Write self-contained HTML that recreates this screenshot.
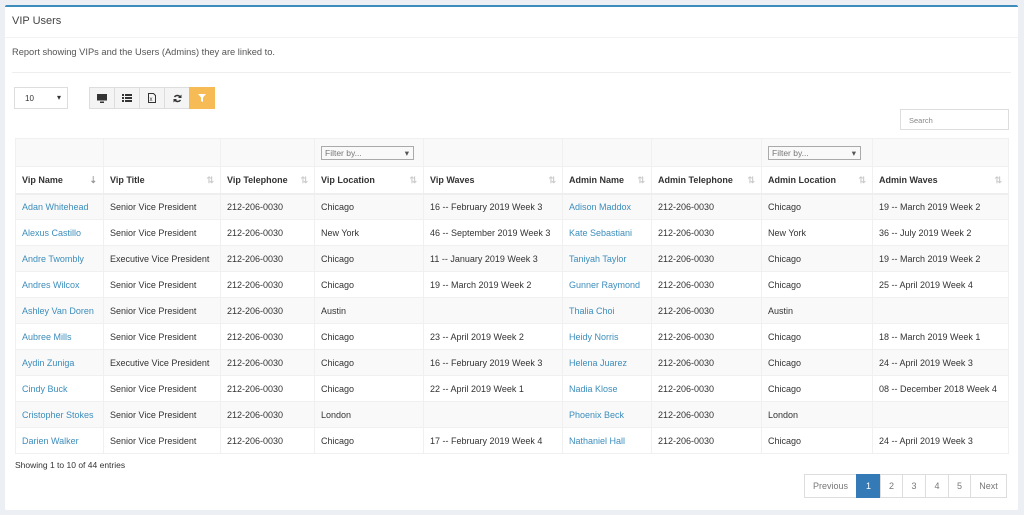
<!DOCTYPE html>
<html><head><style>
*{box-sizing:border-box}
body{margin:0;background:#ecf0f5;font-family:"Liberation Sans",sans-serif;font-size:9px;color:#333;width:1024px;height:515px;overflow:hidden}
.panel{position:absolute;left:5px;top:5px;width:1013px;height:505px;background:#fff;border-top:2px solid #3c8dbc;border-radius:2px}
.title{position:absolute;left:7px;top:8px;font-size:11px;color:#444}
.hr1{position:absolute;left:0;right:0;top:30px;border-top:1px solid #f2f2f2}
.desc{position:absolute;left:7px;top:40px;font-size:9.3px;color:#555}
.hr2{position:absolute;left:7px;right:7px;top:65px;border-top:1px solid #eee}
.sel{position:absolute;left:14px;top:87px;width:54px;height:22px;border:1px solid #ddd;font-size:8px;padding:6px 10px}
.sel:after{content:"▾";position:absolute;right:6px;top:5px;font-size:8px}
.btns{position:absolute;left:90px;top:87px;height:22px;display:flex}
.btns div{width:26px;height:22px;border:1px solid #ddd;background:#f4f4f4;margin-left:-1px;display:flex;align-items:center;justify-content:center}
.btns .f{background:#f6bb55;border-color:#f6bb55;width:26px}
.search{position:absolute;left:900px;top:109px;width:109px;height:21px;border:1px solid #ddd;font-size:7.5px;color:#888;padding:6px 8px}
table{position:absolute;left:15px;top:138px;border-collapse:collapse;width:994px}
td,th{border:1px solid #f0f0f0;padding:0 6px;text-align:left;white-space:nowrap}
tr.fr td{height:28px}
th{height:27px;font-weight:bold;position:relative;border-bottom:2px solid #eee}
th span{position:absolute;right:6px;top:8px;color:#ccc;font-size:9px}
tbody tr{height:26px}
tbody tr:nth-child(odd){background:#f9f9f9}
a{color:#3c8dbc;text-decoration:none}
.fb{width:93px;height:14px;border:1px solid #aaa;font-size:8.5px;color:#777;padding:1px 3px;position:relative}
.fb:after{content:"▾";position:absolute;right:4px;top:1px;color:#555}
.info{position:absolute;left:15px;top:460px;font-size:8.5px}
.pg{position:absolute;left:805px;top:474px;display:flex;height:24px}
.pg div{border:1px solid #ddd;margin-left:-1px;padding:0;text-align:center;line-height:22px;font-size:9px;color:#777}
.pg .a{background:#337ab7;border-color:#337ab7;color:#fff}
</style></head><body>
<div class="panel">
<div class="title">VIP Users</div><div class="hr1"></div>
<div class="desc">Report showing VIPs and the Users (Admins) they are linked to.</div><div class="hr2"></div>
</div>
<div class="sel">10</div>
<div class="btns">
<div><svg width="10" height="9"><rect x="0" y="0" width="10" height="6.5" fill="#333"/><rect x="3" y="7.5" width="4" height="1.5" fill="#333"/></svg></div>
<div><svg width="10" height="8" fill="#333"><rect x="0" y="0" width="2" height="2"/><rect x="3" y="0" width="7" height="2"/><rect x="0" y="3" width="2" height="2"/><rect x="3" y="3" width="7" height="2"/><rect x="0" y="6" width="2" height="2"/><rect x="3" y="6" width="7" height="2"/></svg></div>
<div><svg width="8" height="10"><path d="M.5 .5h5l2 2v7h-7z" fill="none" stroke="#333"/><text x="1.5" y="8" font-size="6" fill="#333">x</text></svg></div>
<div><svg width="9" height="9"><path d="M7.5 3.5A3.5 3.5 0 0 0 1.5 3M1.5 5.5A3.5 3.5 0 0 0 7.5 6" fill="none" stroke="#333" stroke-width="1.5"/><path d="M8.5 .5v3.5h-3.5zM.5 8.5v-3.5h3.5z" fill="#333"/></svg></div>
<div class="f"><svg width="8" height="8"><path d="M0 0h8L5 3.5V8L3 7V3.5z" fill="#fff"/></svg></div>
</div>
<div class="search">Search</div>
<table>
<tr class="fr"><td style="width:88px"></td><td style="width:117px"></td><td style="width:94px"></td><td style="width:109px"><div class="fb">Filter by...</div></td><td style="width:139px"></td><td style="width:89px"></td><td style="width:110px"></td><td style="width:111px"><div class="fb">Filter by...</div></td><td></td></tr>
<tr><th>Vip Name<span style="color:#999">⇣</span></th><th>Vip Title<span>⇅</span></th><th>Vip Telephone<span>⇅</span></th><th>Vip Location<span>⇅</span></th><th>Vip Waves<span>⇅</span></th><th>Admin Name<span>⇅</span></th><th>Admin Telephone<span>⇅</span></th><th>Admin Location<span>⇅</span></th><th>Admin Waves<span>⇅</span></th></tr>
<tbody>
<tr><td><a>Adan Whitehead</a></td><td>Senior Vice President</td><td>212-206-0030</td><td>Chicago</td><td>16 -- February 2019 Week 3</td><td><a>Adison Maddox</a></td><td>212-206-0030</td><td>Chicago</td><td>19 -- March 2019 Week 2</td></tr>
<tr><td><a>Alexus Castillo</a></td><td>Senior Vice President</td><td>212-206-0030</td><td>New York</td><td>46 -- September 2019 Week 3</td><td><a>Kate Sebastiani</a></td><td>212-206-0030</td><td>New York</td><td>36 -- July 2019 Week 2</td></tr>
<tr><td><a>Andre Twombly</a></td><td>Executive Vice President</td><td>212-206-0030</td><td>Chicago</td><td>11 -- January 2019 Week 3</td><td><a>Taniyah Taylor</a></td><td>212-206-0030</td><td>Chicago</td><td>19 -- March 2019 Week 2</td></tr>
<tr><td><a>Andres Wilcox</a></td><td>Senior Vice President</td><td>212-206-0030</td><td>Chicago</td><td>19 -- March 2019 Week 2</td><td><a>Gunner Raymond</a></td><td>212-206-0030</td><td>Chicago</td><td>25 -- April 2019 Week 4</td></tr>
<tr><td><a>Ashley Van Doren</a></td><td>Senior Vice President</td><td>212-206-0030</td><td>Austin</td><td></td><td><a>Thalia Choi</a></td><td>212-206-0030</td><td>Austin</td><td></td></tr>
<tr><td><a>Aubree Mills</a></td><td>Senior Vice President</td><td>212-206-0030</td><td>Chicago</td><td>23 -- April 2019 Week 2</td><td><a>Heidy Norris</a></td><td>212-206-0030</td><td>Chicago</td><td>18 -- March 2019 Week 1</td></tr>
<tr><td><a>Aydin Zuniga</a></td><td>Executive Vice President</td><td>212-206-0030</td><td>Chicago</td><td>16 -- February 2019 Week 3</td><td><a>Helena Juarez</a></td><td>212-206-0030</td><td>Chicago</td><td>24 -- April 2019 Week 3</td></tr>
<tr><td><a>Cindy Buck</a></td><td>Senior Vice President</td><td>212-206-0030</td><td>Chicago</td><td>22 -- April 2019 Week 1</td><td><a>Nadia Klose</a></td><td>212-206-0030</td><td>Chicago</td><td>08 -- December 2018 Week 4</td></tr>
<tr><td><a>Cristopher Stokes</a></td><td>Senior Vice President</td><td>212-206-0030</td><td>London</td><td></td><td><a>Phoenix Beck</a></td><td>212-206-0030</td><td>London</td><td></td></tr>
<tr><td><a>Darien Walker</a></td><td>Senior Vice President</td><td>212-206-0030</td><td>Chicago</td><td>17 -- February 2019 Week 4</td><td><a>Nathaniel Hall</a></td><td>212-206-0030</td><td>Chicago</td><td>24 -- April 2019 Week 3</td></tr>
</tbody></table>
<div class="info">Showing 1 to 10 of 44 entries</div>
<div class="pg"><div style="width:53px">Previous</div><div class="a" style="width:25px">1</div><div style="width:23px">2</div><div style="width:24px">3</div><div style="width:24px">4</div><div style="width:23px">5</div><div style="width:37px">Next</div></div>
</body></html>
